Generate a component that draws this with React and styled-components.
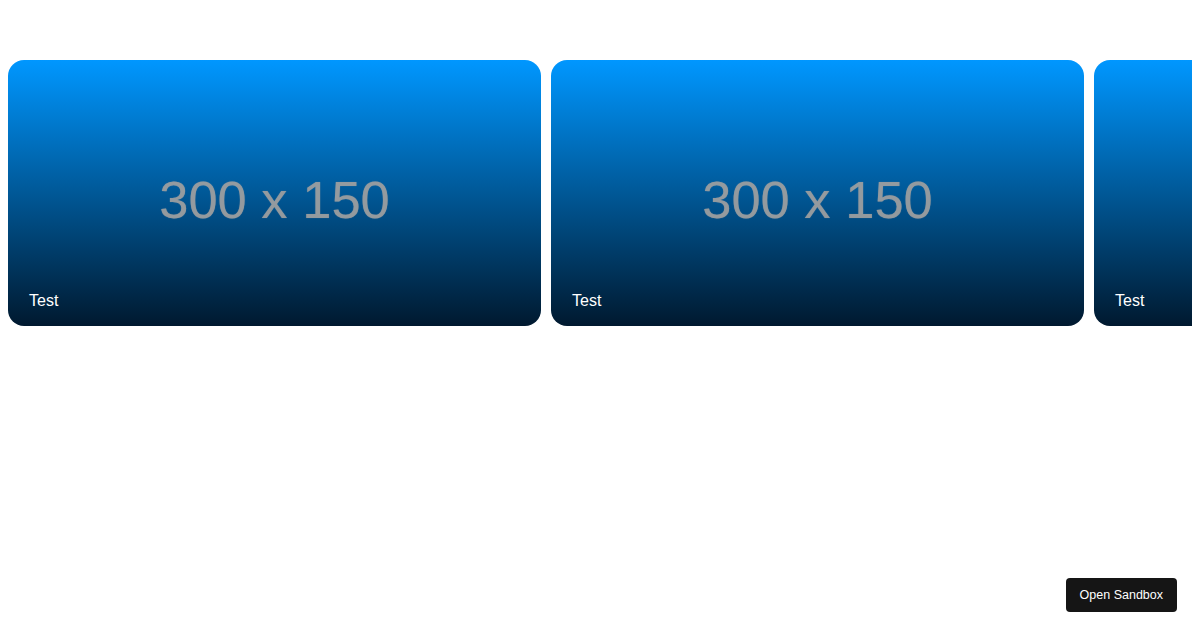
import React from "react";
import styled, { createGlobalStyle } from "styled-components";

const GlobalStyle = createGlobalStyle`
  body {
    margin: 8px;
    background: #fff;
    font-family: "Liberation Sans", Arial, sans-serif;
  }
`;

const Page = styled.div`
  height: 614px;
  display: flex;
  flex-direction: column;
`;

const Carousel = styled.div`
  margin-top: 52px;
  display: flex;
  gap: 10px;
  overflow: hidden;
`;

const Card = styled.div`
  position: relative;
  flex: 0 0 533px;
  height: 266px;
  border-radius: 16px;
  overflow: hidden;
  background: linear-gradient(180deg, #0097ff 0%, #00192f 100%);
  display: flex;
  flex-direction: column;
`;

const Placeholder = styled.div`
  flex: 1;
  display: flex;
  align-items: center;
  justify-content: center;
  padding-top: 12px;
  font-size: 52.5px;
  color: rgba(160, 160, 160, 0.82);
  text-shadow: 0 0 1px rgba(160, 160, 160, 0.6);
`;

const Caption = styled.div`
  position: absolute;
  left: 21px;
  bottom: 16px;
  color: #fff;
  font-size: 16px;
`;

const Footer = styled.div`
  margin-top: auto;
  display: flex;
  justify-content: flex-end;
  padding-right: 15px;
  padding-bottom: 10px;
`;

const SandboxButton = styled.button`
  background: #151515;
  color: #fff;
  border: none;
  border-radius: 4px;
  height: 34px;
  padding: 0 14px;
  font-family: "Liberation Sans", Arial, sans-serif;
  font-size: 12.5px;
  cursor: pointer;
`;

const cards = [
  { id: 1, label: "Test" },
  { id: 2, label: "Test" },
  { id: 3, label: "Test" },
];

export default function App() {
  return (
    <>
      <GlobalStyle />
      <Page>
        <Carousel>
          {cards.map((c) => (
            <Card key={c.id}>
              <Placeholder>300 x 150</Placeholder>
              <Caption>{c.label}</Caption>
            </Card>
          ))}
        </Carousel>
        <Footer>
          <SandboxButton>Open Sandbox</SandboxButton>
        </Footer>
      </Page>
    </>
  );
}
